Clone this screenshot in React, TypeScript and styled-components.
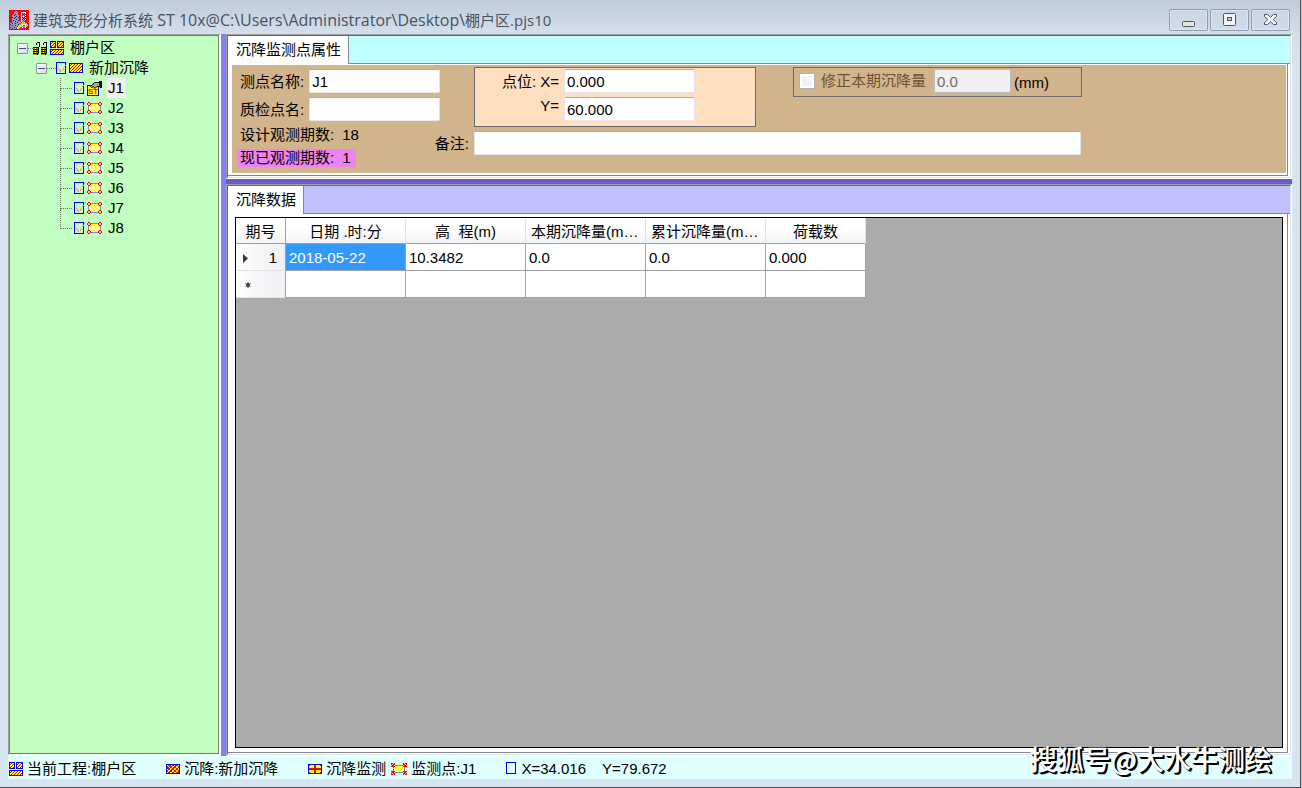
import React from "react";
import styled, { createGlobalStyle } from "styled-components";

const GlobalStyle = createGlobalStyle`
  * { box-sizing: border-box; }
  body {
    margin: 0;
    background: #c3ccd4;
    color: #000;
    font: 15px/18px "Liberation Sans", "Noto Sans CJK SC", sans-serif;
  }
  input, button { font: inherit; color: inherit; }
  svg { display: block; flex: none; }
`;

/* ---------- window ---------- */

const Frame = styled.div`
  position: relative;
  display: flex;
  flex-direction: column;
  min-height: 100vh;
  margin-right: 1px;
  padding: 0 8px 8px;
  border: 0 solid #4c5056;
  border-width: 0 1px 1px 0;
  background: linear-gradient(#becbd8, #d3dfeb 34px, #d7e4f1 60px);
`;

const TitleBar = styled.header`
  display: flex;
  align-items: center;
  gap: 4px;
  height: 34px;
  padding: 5px 2px 0 1px;
`;

const Title = styled.h1`
  flex: 1;
  margin: 0;
  overflow: hidden;
  white-space: nowrap;
  color: #48525e;
  font: 400 15px/20px "Open Sans", "Noto Sans CJK SC", sans-serif;
`;

const TitlePath = styled.span`
  font-size: 16px;
`;

const WindowButtons = styled.div`
  display: flex;
  gap: 2px;
`;

const WindowButton = styled.button`
  display: grid;
  place-items: center;
  width: 39px;
  height: 22px;
  padding: 0;
  border: 1px solid #8f9db2;
  border-radius: 2px;
  background: linear-gradient(#c9d6e3, #d0dce8);
  box-shadow: inset 0 0 0 1px #dbe5ef;
`;

const Main = styled.main`
  display: flex;
  flex: 1;
`;

const Workspace = styled.div`
  display: flex;
  flex: 1;
  flex-direction: column;
  min-width: 0;
`;

const VerticalSplitter = styled.div`
  width: 5px;
  background: #8080ff;
`;

const HorizontalSplitter = styled.div`
  height: 5px;
  background: #6a5acd;
`;

/* ---------- tree ---------- */

const TreePanel = styled.nav`
  display: flex;
  flex: none;
  width: 213px;
  border: solid;
  border-width: 1px 2px 2px 1px;
  border-color: #a0a0a0 #fff #fff #a0a0a0;
`;

const Tree = styled.ul`
  flex: 1;
  margin: 0;
  padding: 2px 0 0;
  list-style: none;
  border: 1px solid #747a78;
  background: #c0ffc0;
`;

const Branch = styled.ul`
  margin: 0;
  padding: 0;
  list-style: none;
`;

const TreeRow = styled.div<{ $indent: number }>`
  display: flex;
  align-items: center;
  height: 20px;
  padding-left: ${(p) => p.$indent}px;
`;

const Expander = styled.button`
  display: grid;
  place-items: center;
  width: 11px;
  height: 11px;
  padding: 0;
  border: 1px solid #919191;
  border-radius: 1px;
  background: linear-gradient(135deg, #fff, #dcdcdc);
  &::before {
    content: "";
    width: 7px;
    height: 1px;
    background: #2b4f9c;
  }
`;

const Stub = styled.span<{ $width: number }>`
  width: ${(p) => p.$width}px;
  border-top: 1px dotted #808080;
`;

const RootIcons = styled.span`
  display: flex;
  align-items: center;
  gap: 2px;
`;

const Guide = styled.span<{ $last: boolean }>`
  width: 12px;
  height: 20px;
  margin-right: 2px;
  &::before, &::after {
    content: "";
    display: block;
    height: 10px;
    border-left: 1px dotted #707070;
  }
  &::before { border-bottom: 1px dotted #707070; }
  &::after { display: ${(p) => (p.$last ? "none" : "block")}; }
`;

const TickBox = styled.span`
  position: relative;
  width: 10px;
  height: 12px;
  margin-right: 3px;
  svg { position: absolute; left: 0; top: 0; pointer-events: none; overflow: visible; }
  input:not(:checked) + svg { display: none; }
`;

const TickInput = styled.input`
  display: block;
  appearance: none;
  width: 10px;
  height: 12px;
  margin: 0;
  border: 1px solid #00f;
`;

const NodeLabel = styled.span<{ $selected?: boolean }>`
  margin-left: 4px;
  padding: 0 2px;
  line-height: 20px;
  white-space: nowrap;
  background: ${(p) => (p.$selected ? "#f0f0f0" : "transparent")};
`;

/* ---------- tab pages ---------- */

const TabPanel = styled.section<{ $grow?: boolean }>`
  display: flex;
  flex-direction: column;
  flex: ${(p) => (p.$grow ? 1 : "none")};
  border: 1px solid;
  border-color: #a0a0a0 #fff #fff #a0a0a0;
`;

const TabInner = styled.div`
  display: flex;
  flex: 1;
  flex-direction: column;
  border: 1px solid;
  border-color: #696969 #e3e3e3 #e3e3e3 #696969;
  background: #fff;
`;

const TabStrip = styled.div<{ $color: string }>`
  display: flex;
  height: 28px;
  &::after {
    content: "";
    flex: 1;
    border-bottom: 1px solid #828790;
    background: ${(p) => p.$color};
  }
`;

const Tab = styled.button`
  padding: 0 7px 0 8px;
  border: 0;
  border-right: 1px solid #828790;
  background: #fff;
  white-space: nowrap;
`;

const Page = styled.div<{ $pad: string }>`
  display: flex;
  flex: 1;
  margin: 0 2px 1px 0;
  padding: ${(p) => p.$pad};
  border: 0 solid #828790;
  border-width: 0 1px 1px 0;
`;

/* ---------- property form ---------- */

const Form = styled.form`
  display: grid;
  flex: 1;
  grid-template-columns: 237px 607px;
  grid-template-rows: auto auto 1fr;
  row-gap: 4px;
  padding: 2px 0 6px 5px;
  background: #d2b48c;
`;

const Fields = styled.div`
  display: flex;
  grid-area: 1 / 1 / 4 / 2;
  flex-direction: column;
  align-items: flex-start;
  gap: 4px;
  padding-top: 2px;
`;

const Field = styled.div<{ $align?: string }>`
  display: flex;
  align-items: ${(p) => p.$align ?? "center"};
  gap: 5px;
  padding-left: 3px;
  white-space: nowrap;
`;

const FieldLabel = styled.label`
  padding-top: 2px;
`;

const TextBox = styled.input<{ $width?: string }>`
  width: ${(p) => p.$width ?? "131px"};
  height: 24px;
  padding: 0 2px;
  border: 1px solid;
  border-color: #abadb3 #e2e3ea #e3e9ef #e2e3ea;
  border-radius: 2px;
  background: #fff;
  &:disabled {
    border-color: #b8bcc4;
    background: #f0f0f0;
    color: #6d6d6d;
  }
`;

const Count = styled.div<{ $marked?: boolean }>`
  display: flex;
  align-items: center;
  gap: 8px;
  height: ${(p) => (p.$marked ? 18 : 20)}px;
  padding: 0 5px 0 3px;
  background: ${(p) => (p.$marked ? "#ee82ee" : "transparent")};
`;

const Groups = styled.div`
  display: flex;
  grid-area: 1 / 2;
  align-items: flex-start;
  gap: 37px;
`;

const PointGroup = styled.fieldset`
  display: flex;
  flex: none;
  flex-direction: column;
  align-items: flex-end;
  gap: 4px;
  width: 282px;
  height: 60px;
  margin: 0;
  padding: 1px 60px 0 0;
  border: 1px solid #696969;
  background: #ffdfc0;
`;

const FixGroup = styled.fieldset`
  display: flex;
  flex: none;
  align-items: center;
  width: 289px;
  height: 30px;
  margin: 0;
  padding: 0 0 2px 5px;
  border: 1px solid #696969;
`;

const FixCheck = styled.input`
  appearance: none;
  width: 16px;
  height: 16px;
  margin: 0 6px 0 0;
  border: 1px solid #b1b1b1;
  background: #f3f3f3;
  box-shadow: inset 0 0 0 2px #fff;
`;

const FixLabel = styled.label`
  margin-right: 8px;
  color: #6b5230;
  white-space: nowrap;
`;

const Unit = styled.span`
  margin-left: 3px;
  padding-top: 3px;
`;

const RemarkLabel = styled(FieldLabel)`
  grid-area: 2 / 1;
  align-self: center;
  justify-self: end;
  margin-right: 5px;
`;

/* ---------- data grid ---------- */

const GridArea = styled.div`
  flex: 1;
  border: 1px solid #000;
  background: #ababab;
`;

const Table = styled.table`
  width: 630px;
  table-layout: fixed;
  border-spacing: 0;
  background: #fff;
`;

const HeadCell = styled.th`
  height: 26px;
  padding: 2px 5px 0;
  overflow: hidden;
  border: 0 solid #a0a0a0;
  border-bottom-width: 1px;
  border-right: 1px solid #e2e2e4;
  background: linear-gradient(#fff 40%, #f1f2f4);
  font-weight: 400;
  text-align: center;
  text-overflow: ellipsis;
  white-space: pre;
  &:first-child { border-right-color: #a0a0a0; }
`;

const RowHead = styled.th`
  height: 27px;
  padding: 2px 8px 0 7px;
  border-right: 1px solid #a0a0a0;
  border-bottom: 1px solid #e2e2e4;
  background: linear-gradient(90deg, #fff, #f6f7f9 40%, #eff0f3);
  font-weight: 400;
`;

const RowMark = styled.span`
  display: flex;
  align-items: center;
  justify-content: space-between;
`;

const Cell = styled.td<{ $selected?: boolean }>`
  height: 27px;
  padding: 2px 3px 0;
  border: 0 solid #a0a0a0;
  border-width: 0 1px 1px 0;
  background: ${(p) => (p.$selected ? "#3399ff" : "#fff")};
  color: ${(p) => (p.$selected ? "#fff" : "#000")};
`;

/* ---------- status bar ---------- */

const StatusBar = styled.footer`
  display: flex;
  align-items: center;
  height: 23px;
  padding: 2px 0 0 1px;
  background: #e0ffff;
  white-space: nowrap;
`;

const StatusItem = styled.span<{ $after?: number }>`
  display: flex;
  align-items: center;
  gap: 4px;
  margin-right: ${(p) => p.$after ?? 30}px;
`;

const Watermark = styled.div`
  position: absolute;
  right: 28px;
  bottom: 9px;
  color: #fff;
  font: 500 27px/38px "Noto Sans CJK SC", sans-serif;
  text-shadow: 1px 1px 0 #000, 2px 2px 0 #000, 2px 1px 0 #000;
`;

/* ---------- pixel icons ---------- */

const palette: Record<string, string> = {
  R: "#ff0000", B: "#0000ff", Y: "#ffff00", K: "#000000", W: "#ffffff",
  O: "#9a9a10", G: "#b4b4b4", D: "#5c5c5c", M: "#ff00ff", P: "#9a94b8", N: "#30206c",
  L: "#8080e0", V: "#2ee07a", S: "#f4c8b8", T: "#f08c84",
};

function Pixels({ rows }: { rows: string[] }) {
  const width = Math.max(...rows.map((r) => r.length));
  return (
    <svg width={width} height={rows.length} shapeRendering="crispEdges" aria-hidden="true">
      {rows.flatMap((row, y) =>
        [...row].map((c, x) =>
          palette[c] ? <rect key={`${x}-${y}`} x={x} y={y} width={1} height={1} fill={palette[c]} /> : null
        )
      )}
    </svg>
  );
}

const logoRows = [
  "RRRRRRRRRRRRRRRRRRRR",
  "RRRRRRPPRRRRRRRRRRRR",
  "RRRRRPPPPRRRWWWWWRRR",
  "RRRRNPPPPRRRWNPNWRRR",
  "RRRRPPNPPRRRWPNPNRRR",
  "RRRPPNPPPPRRWNPNWRRR",
  "RRRPPPPNPPRRWPWPNRRR",
  "RRRNPPNPPNRRWNPNWRRR",
  "RRRPPNPPPPRRWPNPNRRR",
  "RRRPPPPNPPRRWNPNWRRR",
  "RRRPNPPPPNRRWPMPRRRR",
  "RNRPPPNPPPPMWMPMRRRR",
  "RPNPPPPPNPPPMYVYRRRR",
  "RPPNPPNPPPPMGGGGGGRR",
  "RNPPPPPPPNPPGWWWWGGR",
  "RPPNPPNPPPYYGWDDWGGR",
  "RPPPPPPPNYVYGGGGGGRR",
  "RNPPPNPPYVYMMWMMWRRR",
  "RPPNPPPNYYMMRMMRRRRR",
  "RRRRRRRRRRRRRRRRRRRR",
];

const lockRows = [
  "....KKK....KKK.",
  "...K..K...K..K.",
  "...K..K...K..K.",
  "......K......K.",
  "......K......K.",
  "KKKKKK..KKKKKK.",
  "OOYOOK..OOYOOK.",
  "KKKKKK..KKKKKK.",
  "OOYOOK..OOYOOK.",
  "KKKKKK..KKKKKK.",
  "OOYOOK..OOYOOK.",
  "KKKKKK..KKKKKK.",
  "OOOOK...OOOOK..",
];

const pointRows = [
  ".RR.........RR.",
  "RSSRLLLLLLLRSSR",
  "RSSRYYWYYYWRSSR",
  ".RRYWYYYWYYYRR.",
  ".LYYYWYYYWYYYL.",
  ".LWYYYWYYYWYYL.",
  ".LYWYYYWYYYWYL.",
  ".LYYWYYYWYYYWL.",
  ".RRYYWYYYWYYRR.",
  "RSSRYYWYYYWRSSR",
  "RSSRLLLLLLLRSSR",
  ".RR.........RR.",
];

const statusPointRows = [
  "RRSR........RSRR",
  "RSRR........RRSR",
  "SRRSLLLLLLLLSRRS",
  "RRRRWYYYWYYYRRRR",
  "..LYYWYYYWYYYL..",
  "..LWYYWYYYWYYL..",
  "..LYWYYWYYYWYL..",
  "..LYYWYYWYYYWL..",
  "RRRRYYWYYWYYRRRR",
  "SRRSLLLLLLLLSRRS",
  "RSRR........RRSR",
  "RRSR........RSRR",
];

type Shade = (x: number, y: number) => boolean;
const diagonal: Shade = (x, y) => (x + y) % 3 === 0;
const checker: Shade = (x, y) => x % 4 < 2 !== y % 4 < 2 || (x + y) % 5 === 0;
const cross: Shade = (x, y) =>
  x === 6 || x === 7 || y === 4 || y === 5 || ((x === 1 || x === 12) && (y === 1 || y === 8));

function boxRows(w: number, h: number, shade: Shade) {
  return Array.from({ length: h }, (_, y) =>
    Array.from({ length: w }, (_, x) =>
      x === 0 || y === 0 || x === w - 1 || y === h - 1 ? "B" : shade(x, y) ? "R" : "Y"
    ).join("")
  );
}

const sectionRows = boxRows(14, 10, diagonal);
const settleRows = boxRows(14, 10, checker);
const monitorRows = boxRows(14, 10, cross);
const projectRows = [
  ...boxRows(6, 7, diagonal).map((r, i) => `${r}.${boxRows(7, 7, diagonal)[i]}`),
  "",
  ...boxRows(14, 6, diagonal),
];

const tickRows = [
  "...........T",
  "..........T.",
  "............",
  ".........T..",
  "........T...",
  "............",
  "..T....T....",
  "...T..T.....",
  "...TT.T.....",
  "....T.......",
];

const EditIcon = () => (
  <svg width="15" height="15" aria-hidden="true">
    <rect x="0.5" y="4.5" width="11" height="10" fill="#ff0" stroke="#00f" />
    <text x="1" y="13" fontSize="8" fontWeight="700" fill="#f00">ST</text>
    <path d="M3.5 5.5 L7.5 1.5 H13 V5.5 H10 L8 7.5 L6.5 5.5 L4.5 6.5 Z" fill="#a8a8a8" stroke="#000" />
    <path d="M12 0 H15 V7 H13 Z" fill="#000" />
  </svg>
);

const PageIcon = () => (
  <svg width="11" height="13" aria-hidden="true">
    <rect x="0.5" y="0.5" width="9" height="11" fill="none" stroke="#00f" />
  </svg>
);

const MinimizeIcon = () => (
  <svg width="13" height="14" aria-hidden="true">
    <rect x="0.5" y="8.5" width="12" height="5" rx="1" fill="#e4e4dc" stroke="#50545f" />
  </svg>
);

const MaximizeIcon = () => (
  <svg width="13" height="13" aria-hidden="true">
    <rect x="0.5" y="0.5" width="12" height="12" rx="1" fill="#f4f4f4" stroke="#50546a" />
    <rect x="4.5" y="4.5" width="4" height="3" fill="#c4d2e0" stroke="#50546a" />
  </svg>
);

const CloseIcon = () => (
  <svg width="15" height="13" aria-hidden="true">
    <path
      d="M1.5 1.5 H4.5 L7.5 4.2 L10.5 1.5 H13.5 V3.5 L10.2 6.5 L13.5 9.5 V11.5 H10.5 L7.5 8.8 L4.5 11.5 H1.5 V9.5 L4.8 6.5 L1.5 3.5 Z"
      fill="#f6f6f6" stroke="#50546a" strokeLinejoin="round"
    />
  </svg>
);

const CurrentRowIcon = () => (
  <svg width="6" height="9" aria-hidden="true">
    <path d="M0 0 L5 4.5 L0 9 Z" fill="#3c3c3c" />
  </svg>
);

const NewRowIcon = () => (
  <svg width="10" height="8" aria-hidden="true">
    <circle cx="5" cy="4" r="2" fill="#555" />
    <path d="M5 1 V7 M2.5 2.5 L7.5 5.5 M7.5 2.5 L2.5 5.5" stroke="#444" />
  </svg>
);

function Tick({ name }: { name: string }) {
  return (
    <TickBox>
      <TickInput type="checkbox" defaultChecked aria-label={name} />
      <Pixels rows={tickRows} />
    </TickBox>
  );
}

/* ---------- data ---------- */

const points = ["J1", "J2", "J3", "J4", "J5", "J6", "J7", "J8"];
const columns = ["日期 .时:分", "高  程(m)", "本期沉降量(mm)", "累计沉降量(mm)", "荷载数"];
const record = ["2018-05-22", "10.3482", "0.0", "0.0", "0.000"];

export default function App() {
  return (
    <Frame>
      <GlobalStyle />
      <TitleBar>
        <Pixels rows={logoRows} />
        <Title>
          建筑变形分析系统
          <TitlePath>{" ST 10x@C:\\Users\\Administrator\\Desktop\\"}</TitlePath>
          棚户区.pjs10
        </Title>
        <WindowButtons>
          <WindowButton aria-label="最小化"><MinimizeIcon /></WindowButton>
          <WindowButton aria-label="最大化"><MaximizeIcon /></WindowButton>
          <WindowButton aria-label="关闭"><CloseIcon /></WindowButton>
        </WindowButtons>
      </TitleBar>

      <Main>
        <TreePanel>
          <Tree>
            <li>
              <TreeRow $indent={7}>
                <Expander aria-label="折叠棚户区" />
                <Stub $width={5} />
                <RootIcons>
                  <Pixels rows={lockRows} />
                  <Pixels rows={projectRows} />
                </RootIcons>
                <NodeLabel>棚户区</NodeLabel>
              </TreeRow>
              <Branch>
                <li>
                  <TreeRow $indent={26}>
                    <Expander aria-label="折叠新加沉降" />
                    <Stub $width={9} />
                    <Tick name="新加沉降" />
                    <Pixels rows={sectionRows} />
                    <NodeLabel>新加沉降</NodeLabel>
                  </TreeRow>
                  <Branch>
                    {points.map((name, i) => (
                      <li key={name}>
                        <TreeRow $indent={50}>
                          <Guide $last={i === points.length - 1} />
                          <Tick name={name} />
                          {i === 0 ? <EditIcon /> : <Pixels rows={pointRows} />}
                          <NodeLabel $selected={i === 0}>{name}</NodeLabel>
                        </TreeRow>
                      </li>
                    ))}
                  </Branch>
                </li>
              </Branch>
            </li>
          </Tree>
        </TreePanel>
        <VerticalSplitter />

        <Workspace>
          <TabPanel>
            <TabInner>
              <TabStrip $color="#c0ffff"><Tab>沉降监测点属性</Tab></TabStrip>
              <Page $pad="1px 1px 2px 4px">
                <Form>
                  <Fields>
                    <Field>
                      <FieldLabel htmlFor="name">测点名称:</FieldLabel>
                      <TextBox id="name" defaultValue="J1" />
                    </Field>
                    <Field>
                      <FieldLabel htmlFor="check">质检点名:</FieldLabel>
                      <TextBox id="check" />
                    </Field>
                    <Count><span>设计观测期数:</span><span>18</span></Count>
                    <Count $marked><span>现已观测期数:</span><span>1</span></Count>
                  </Fields>
                  <Groups>
                    <PointGroup>
                      <Field>
                        <FieldLabel htmlFor="px">点位: X=</FieldLabel>
                        <TextBox id="px" defaultValue="0.000" />
                      </Field>
                      <Field $align="flex-start">
                        <label htmlFor="py">Y=</label>
                        <TextBox id="py" defaultValue="60.000" />
                      </Field>
                    </PointGroup>
                    <FixGroup>
                      <FixCheck id="fix" type="checkbox" disabled />
                      <FixLabel htmlFor="fix">修正本期沉降量</FixLabel>
                      <TextBox $width="77px" defaultValue="0.0" disabled aria-label="修正值" />
                      <Unit>(mm)</Unit>
                    </FixGroup>
                  </Groups>
                  <RemarkLabel htmlFor="remark">备注:</RemarkLabel>
                  <TextBox id="remark" $width="100%" />
                </Form>
              </Page>
            </TabInner>
          </TabPanel>
          <HorizontalSplitter />
          <TabPanel $grow>
            <TabInner>
              <TabStrip $color="#c0c0ff"><Tab>沉降数据</Tab></TabStrip>
              <Page $pad="3px 4px 4px 7px">
                <GridArea>
                  <Table>
                    <colgroup>
                      <col width="50" />
                      <col width="120" />
                      <col width="120" />
                      <col width="120" />
                      <col width="120" />
                      <col width="100" />
                    </colgroup>
                    <thead>
                      <tr>
                        <HeadCell>期号</HeadCell>
                        {columns.map((c) => <HeadCell key={c}>{c}</HeadCell>)}
                      </tr>
                    </thead>
                    <tbody>
                      <tr>
                        <RowHead><RowMark><CurrentRowIcon />1</RowMark></RowHead>
                        {record.map((v, i) => <Cell key={i} $selected={i === 0}>{v}</Cell>)}
                      </tr>
                      <tr>
                        <RowHead><RowMark><NewRowIcon /></RowMark></RowHead>
                        {record.map((_, i) => <Cell key={i} />)}
                      </tr>
                    </tbody>
                  </Table>
                </GridArea>
              </Page>
            </TabInner>
          </TabPanel>
        </Workspace>
      </Main>

      <StatusBar>
        <StatusItem><Pixels rows={projectRows} />当前工程:棚户区</StatusItem>
        <StatusItem><Pixels rows={settleRows} />沉降:新加沉降</StatusItem>
        <StatusItem $after={5}><Pixels rows={monitorRows} />沉降监测</StatusItem>
        <StatusItem><Pixels rows={statusPointRows} />监测点:J1</StatusItem>
        <StatusItem $after={16}><PageIcon />X=34.016</StatusItem>
        <StatusItem $after={0}>Y=79.672</StatusItem>
      </StatusBar>
      <Watermark>搜狐号@大水牛测绘</Watermark>
    </Frame>
  );
}
